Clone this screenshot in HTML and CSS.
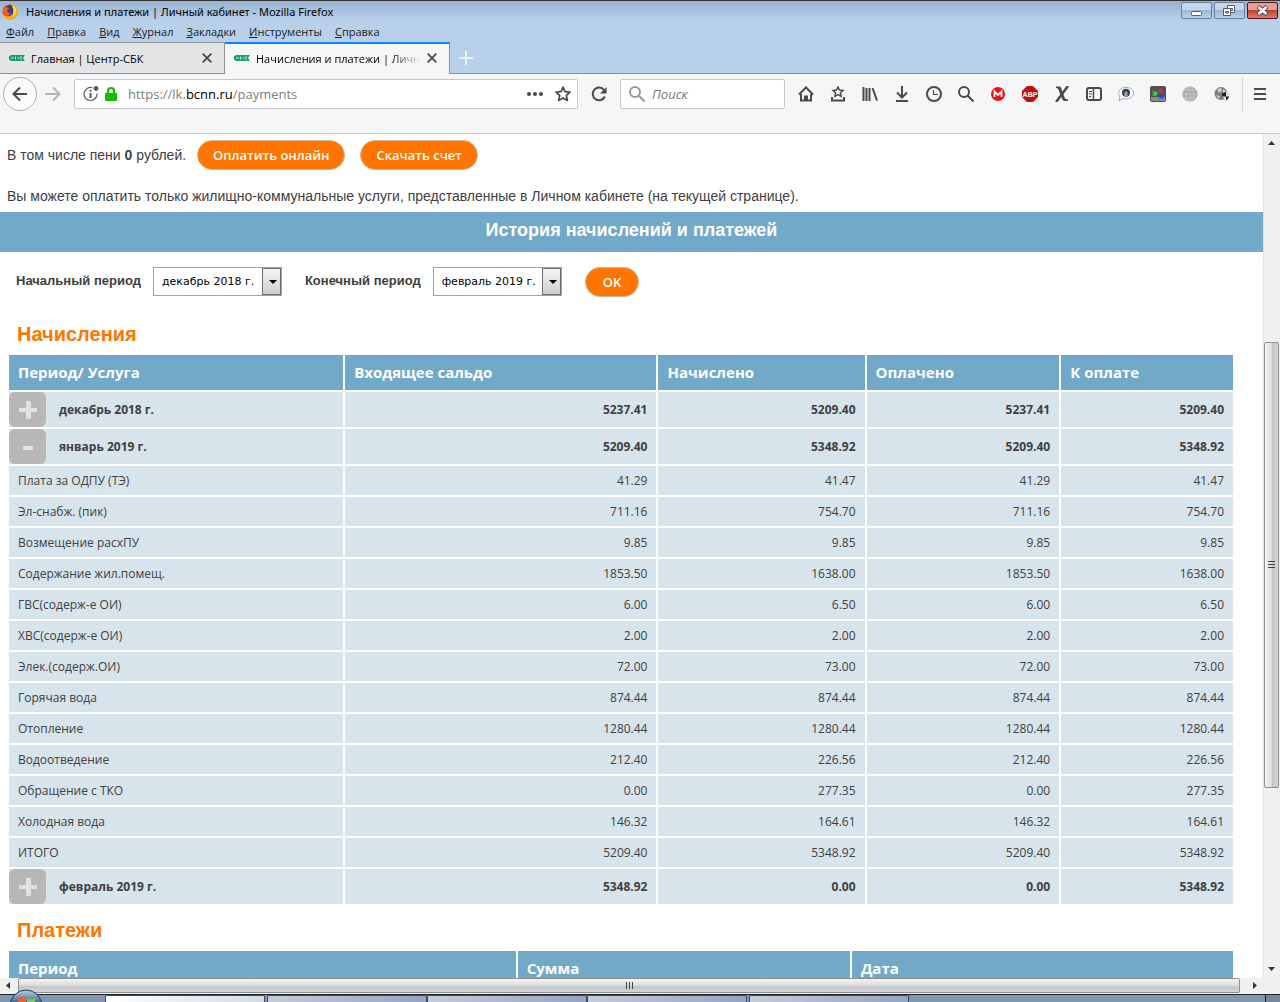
FILE: index.html
```html
<!DOCTYPE html>
<html lang="ru">
<head>
<meta charset="utf-8">
<title>Начисления и платежи | Личный кабинет</title>
<link rel="stylesheet" href="styles.css">
</head>
<body>
<div class="window">
  <header class="chrome">
    <div class="titlebar">
      <svg class="icon" viewBox="0 0 16 16"><circle cx="8" cy="8" r="7.6" fill="#e8371f"/><circle cx="8.3" cy="6.2" r="5.2" fill="#26478f"/><path d="M9 0c5 1 7.500 5 6.600 9-1 4-4 6.500-8 6.500C4 15.500 1 13 .500 9c2 3 5 4 7.500 3 3-1 4-4 3-7-.500-2-1-3.500-2-5z" fill="#ffb01a"/><path d="M1 5C1 3 2 2 3 1.500l.500 2C5 3 6 3.500 7 4.500L5 6.500c0 2 2 2.500 4 2-1 2.500-3 3-5 2.500C2 10 1 8 1 5z" fill="#f4601c"/><path d="M10 1c3 1 4.500 4 4 7-.500 2-1.500 3.500-3 4 1-3 1-7-1-11z" fill="#ffe03a"/></svg>
      <span class="window-title">Начисления и платежи | Личный кабинет - Mozilla Firefox</span>
      <div class="window-buttons">
        <button class="win-btn" aria-label="Свернуть"><svg width="29" height="15" viewBox="0 0 29 15"><rect x="9.500" y="8.500" width="10" height="4" rx="1" fill="#fff" stroke="#555b6b"/></svg></button>
        <button class="win-btn" aria-label="Развернуть"><svg width="29" height="15" viewBox="0 0 29 15"><path d="M12.500 2.500h7v7h-7z" fill="#fff" stroke="#555b6b"/><path d="M15.500 5.500h2v2h-2z" fill="#9ebad8" stroke="#555b6b"/><path d="M8.500 5.500h7v7h-7z" fill="#fff" stroke="#555b6b"/><path d="M10.500 8.500h3v1.500h-3z" fill="#9ebad8" stroke="#555b6b"/></svg></button>
        <button class="win-btn win-close" aria-label="Закрыть"><svg width="29" height="15" viewBox="0 0 29 15"><path d="M10 3.500l9 8M19 3.500l-9 8" stroke="#55505f" stroke-width="4.500"/><path d="M10.500 4l8 7M18.500 4l-8 7" stroke="#fff" stroke-width="2.500"/></svg></button>
      </div>
    </div>
    <nav class="menubar">
      <a href="#"><u>Ф</u>айл</a><a href="#"><u>П</u>равка</a><a href="#"><u>В</u>ид</a><a href="#"><u>Ж</u>урнал</a><a href="#"><u>З</u>акладки</a><a href="#"><u>И</u>нструменты</a><a href="#"><u>С</u>правка</a>
    </nav>
    <div class="tabs">
      <div class="tab">
        <svg class="icon" viewBox="0 0 16 16"><path d="M2 5h14l-2 3 2 3H2L0 9.500v-3z" fill="#1f9a6c"/><path d="M2 8h3M6.500 6.500v3M8.500 8h2M12 6v4" stroke="#c5e6d9"/></svg>
        <span class="tab-label">Главная | Центр-СБК</span>
        <button class="tab-close" aria-label="Закрыть вкладку"><svg width="10" height="10" viewBox="0 0 10 10"><path d="M.700.700l8.600 8.600M9.300.700L.700 9.300" stroke="#4a4a4b" stroke-width="1.800"/></svg></button>
      </div>
      <div class="tab tab-active">
        <svg class="icon" viewBox="0 0 16 16"><path d="M2 5h14l-2 3 2 3H2L0 9.500v-3z" fill="#1f9a6c"/><path d="M2 8h3M6.500 6.500v3M8.500 8h2M12 6v4" stroke="#c5e6d9"/></svg>
        <span class="tab-label">Начисления и платежи | Личный кабинет</span>
        <button class="tab-close" aria-label="Закрыть вкладку"><svg width="10" height="10" viewBox="0 0 10 10"><path d="M.700.700l8.600 8.600M9.300.700L.700 9.300" stroke="#4a4a4b" stroke-width="1.800"/></svg></button>
      </div>
      <button class="new-tab" aria-label="Новая вкладка"><svg width="14" height="14" viewBox="0 0 14 14"><path d="M7 0v14M0 7h14" stroke="#e9f1fa" stroke-width="2"/></svg></button>
    </div>
    <div class="navbar">
      <button class="back" aria-label="Назад"><svg class="icon" viewBox="0 0 16 16"><path d="M15 8H1.500M8 1.500L1.500 8 8 14.500" fill="none" stroke="#4a4a4b" stroke-width="2"/></svg></button>
      <button class="tool forward" aria-label="Вперёд"><svg class="icon" viewBox="0 0 16 16"><path d="M0 8h14.500M8 1.500L14.500 8 8 14.500" fill="none" stroke="#b3b4b6" stroke-width="2"/></svg></button>
      <div class="urlbar">
        <svg class="icon" viewBox="0 0 16 16"><path d="M14 7.500A6.500 6.500 0 1 1 9.500 1.800" fill="none" stroke="#5a5a5c" stroke-width="1.200"/><circle cx="13" cy="2.500" r="2.400" fill="#5a5a5c"/><path d="M7.500 7v5" stroke="#5a5a5c" stroke-width="2"/><circle cx="7.500" cy="4.800" r="1.100" fill="#5a5a5c"/></svg>
        <svg class="icon lock" viewBox="0 0 16 16"><path d="M5 8V5a3 3 0 0 1 6 0v3" fill="none" stroke="#12bc00" stroke-width="2.200"/><rect x="2" y="7" width="12" height="8" rx="1" fill="#12bc00"/></svg>
        <span class="url">https://lk.<b>bcnn.ru</b>/payments</span>
        <svg class="icon" viewBox="0 0 16 16" fill="#4a4a4b"><circle cx="2" cy="8" r="2"/><circle cx="8" cy="8" r="2"/><circle cx="14" cy="8" r="2"/></svg>
        <svg class="icon" viewBox="0 0 16 16"><path d="M8 1.200l2 4.500 5 .500-3.700 3.300 1.100 4.900L8 11.900l-4.400 2.500 1.100-4.900L1 6.200l5-.500z" fill="none" stroke="#4a4a4b" stroke-width="1.700" stroke-linejoin="round"/></svg>
      </div>
      <button class="tool reload" aria-label="Обновить"><svg class="icon" viewBox="0 0 16 16"><path d="M13.800 10.500A6.300 6.300 0 1 1 13 4" fill="none" stroke="#4a4a4b" stroke-width="2"/><path d="M15.500 1v6.500H9z" fill="#4a4a4b"/></svg></button>
      <div class="search">
        <svg class="icon" viewBox="0 0 16 16"><circle cx="6" cy="6" r="5" fill="none" stroke="#98989a" stroke-width="2"/><path d="M9.500 9.500l6 6" stroke="#98989a" stroke-width="2"/></svg>
        <input class="search-input" type="text" placeholder="Поиск" aria-label="Поиск">
      </div>
      <div class="tools">
        <button class="tool" aria-label="Домой"><svg class="icon" viewBox="0 0 16 16"><path d="M1 8.500l7-7 7 7M3 8v6.500h10V8" fill="none" stroke="#4a4a4b" stroke-width="2"/><path d="M6 15v-5.500h4V15z" fill="#4a4a4b"/></svg></button>
        <button class="tool" aria-label="Закладки"><svg class="icon" viewBox="0 0 16 16"><path d="M8 1l1.500 3 3.500.500-2.600 2.300.700 3.500L8 8.700l-3.100 1.600.700-3.500L3 4.500 6.500 4z" fill="none" stroke="#4a4a4b" stroke-width="1.500"/><path d="M2 11v3.500h12V11" fill="none" stroke="#4a4a4b" stroke-width="2"/></svg></button>
        <button class="tool" aria-label="Библиотека"><svg class="icon" viewBox="0 0 16 16"><path d="M1.500 1v14M4.500 2v13M7.500 2v13M10.500 2l4.500 12.500" stroke="#4a4a4b" stroke-width="2"/></svg></button>
        <button class="tool" aria-label="Загрузки"><svg class="icon" viewBox="0 0 16 16"><path d="M8 0v11M3 6.500l5 5 5-5M2 15h12" fill="none" stroke="#4a4a4b" stroke-width="2"/></svg></button>
        <button class="tool" aria-label="История"><svg class="icon" viewBox="0 0 16 16"><circle cx="8" cy="8" r="7" fill="none" stroke="#4a4a4b" stroke-width="2"/><path d="M7.500 4v4.500H12" fill="none" stroke="#4a4a4b" stroke-width="1.200"/></svg></button>
        <button class="tool" aria-label="Найти"><svg class="icon" viewBox="0 0 16 16"><circle cx="6" cy="6" r="5" fill="none" stroke="#4a4a4b" stroke-width="2"/><path d="M9.500 9.500l6 6" stroke="#4a4a4b" stroke-width="2"/></svg></button>
        <button class="tool" aria-label="Mega"><svg class="icon" viewBox="0 0 16 16"><circle cx="8" cy="8" r="7" fill="#f20d17"/><path d="M4.500 11V5.500L8 9l3.500-3.500V11" fill="none" stroke="#fff" stroke-width="1.800"/></svg></button>
        <button class="tool" aria-label="Adblock Plus"><svg class="icon" viewBox="0 0 16 16"><path d="M5 0h6l5 5v6l-5 5H5l-5-5V5z" fill="#c70d0b"/><text x="8" y="11" text-anchor="middle" class="abp-text">ABP</text></svg></button>
        <button class="tool" aria-label="Расширение X"><svg class="icon" viewBox="0 0 16 16"><path d="M2 0.500h3.500c1 0 1.500 1 2 2.500l2.500 7c.800 2.500 1.500 3.500 4 3.500v1.500h-3c-2 0-2.800-1.500-3.500-3.500L5 5C4.300 3 3.800 2 2 2z" fill="#4a4a4b"/><path d="M14 0L8.500 7.500 2 16" fill="none" stroke="#4a4a4b" stroke-width="2.500"/></svg></button>
        <button class="tool" aria-label="Боковая панель"><svg class="icon" viewBox="0 0 16 16"><rect x="1" y="2" width="14" height="12" rx="2" fill="none" stroke="#4a4a4b" stroke-width="2"/><path d="M7.500 2v12" stroke="#4a4a4b" stroke-width="1.500"/><path d="M3 5.500h3M3 8h3M3 10.500h2" stroke="#4a4a4b"/></svg></button>
        <button class="tool" aria-label="Сообщения"><svg class="icon" viewBox="0 0 16 16"><path d="M1 15l1-4C-1 7 1 1.500 8 1.500S16 6 15.500 8c-1 4-6 5.500-10.500 4.500z" fill="#fff" stroke="#a7a7aa"/><circle cx="8" cy="6.800" r="4" fill="#24406d"/><path d="M7 10.500c-2-3 0-5 2-5.500 1 2 0 3 1 5z" fill="#c58d7c"/></svg></button>
        <button class="tool" aria-label="Прокси"><svg class="icon" viewBox="0 0 16 16"><rect width="16" height="16" rx="2" fill="#4f5152"/><rect x="1" y="11" width="14" height="4" fill="#898b8c"/><path d="M2 5l3 1V4l3 3.500L5 11V9.500L2 10l1.500-2.500z" fill="#35d52e"/><path d="M9 1.500l1.500 1L13 2l-1 2 1 2.500-3 .500-2-2 1.500-1z" fill="#e92631"/><path d="M9 8l2 .500L13.500 8 13 10l.500 3-2.500-1-2 1.500L9.500 11 8 10z" fill="#1750e9"/></svg></button>
        <button class="tool" aria-label="Сеть"><svg class="icon" viewBox="0 0 16 16"><circle cx="8" cy="8" r="7.600" fill="#a9a9a9"/><path d="M0 8h16M1.500 4h13M1.500 12h13M8 0v16" stroke="#c8c8c8" fill="none"/><ellipse cx="8" cy="8" rx="4" ry="7.500" fill="none" stroke="#c8c8c8"/></svg></button>
        <button class="tool" aria-label="Защита"><svg class="icon" viewBox="0 0 16 16"><circle cx="7" cy="7.500" r="6.500" fill="#7c7c7e"/><path d="M3 3l4-1 1 3-3 2zM2 9l4 1-1 3zM9 3l3 2-3 2z" fill="#cfcfd1"/><path d="M8 7l4-1.500L15.500 7c0 3.500-1 6-3.500 7.500C9.500 13 8 10.500 8 7z" fill="#dcdcde"/><path d="M12 6v4.500H8.500C8 9 8 8 8.200 7.200zM12 10.500h3c-.500 2-1.500 3-3 4z" fill="#19191a"/></svg></button>
      </div>
      <button class="tool menu-btn" aria-label="Меню"><svg class="icon" viewBox="0 0 16 16"><path d="M2 3h12M2 8h12M2 13h12" stroke="#4a4a4b" stroke-width="2"/></svg></button>
    </div>
  </header>

  <div class="viewport">
    <main class="page">
      <p class="penalty"><span>В том числе пени <strong>0</strong> рублей.</span><button class="pill">Оплатить онлайн</button><button class="pill">Скачать счет</button></p>
      <p class="note">Вы можете оплатить только жилищно-коммунальные услуги, представленные в Личном кабинете (на текущей странице).</p>
      <h1 class="banner">История начислений и платежей</h1>
      <form class="filter">
        <label class="filter-label" for="from">Начальный период</label>
        <div class="select"><select id="from"><option>декабрь 2018 г.</option></select></div>
        <label class="filter-label" for="to">Конечный период</label>
        <div class="select"><select id="to"><option>февраль 2019 г.</option></select></div>
        <button class="pill ok" type="button">OK</button>
      </form>
      <h2 class="section">Начисления</h2>
      <table class="grid">
        <colgroup><col class="c-name"><col class="c-in"><col class="c-charged"><col class="c-paid"><col></colgroup>
        <thead><tr><th>Период/ Услуга</th><th>Входящее сальдо</th><th>Начислено</th><th>Оплачено</th><th>К оплате</th></tr></thead>
        <tbody>
          <tr class="period"><td><div class="period-name"><button class="toggle" aria-label="Развернуть"><svg width="18" height="18" viewBox="0 0 18 18"><path d="M7 0h5v7h6v4h-6v7H7v-7H0V7h7z" fill="#e2e2e2"/></svg></button>декабрь 2018 г.</div></td><td>5237.41</td><td>5209.40</td><td>5237.41</td><td>5209.40</td></tr>
          <tr class="period"><td><div class="period-name"><button class="toggle" aria-label="Свернуть"><svg width="18" height="18" viewBox="0 0 18 18"><path d="M4 8h10v4H4z" fill="#e2e2e2"/></svg></button>январь 2019 г.</div></td><td>5209.40</td><td>5348.92</td><td>5209.40</td><td>5348.92</td></tr>
          <tr><td>Плата за ОДПУ (ТЭ)</td><td>41.29</td><td>41.47</td><td>41.29</td><td>41.47</td></tr>
          <tr><td>Эл-снабж. (пик)</td><td>711.16</td><td>754.70</td><td>711.16</td><td>754.70</td></tr>
          <tr><td>Возмещение расхПУ</td><td>9.85</td><td>9.85</td><td>9.85</td><td>9.85</td></tr>
          <tr><td>Содержание жил.помещ.</td><td>1853.50</td><td>1638.00</td><td>1853.50</td><td>1638.00</td></tr>
          <tr><td>ГВС(содерж-е ОИ)</td><td>6.00</td><td>6.50</td><td>6.00</td><td>6.50</td></tr>
          <tr><td>ХВС(содерж-е ОИ)</td><td>2.00</td><td>2.00</td><td>2.00</td><td>2.00</td></tr>
          <tr><td>Элек.(содерж.ОИ)</td><td>72.00</td><td>73.00</td><td>72.00</td><td>73.00</td></tr>
          <tr><td>Горячая вода</td><td>874.44</td><td>874.44</td><td>874.44</td><td>874.44</td></tr>
          <tr><td>Отопление</td><td>1280.44</td><td>1280.44</td><td>1280.44</td><td>1280.44</td></tr>
          <tr><td>Водоотведение</td><td>212.40</td><td>226.56</td><td>212.40</td><td>226.56</td></tr>
          <tr><td>Обращение с ТКО</td><td>0.00</td><td>277.35</td><td>0.00</td><td>277.35</td></tr>
          <tr><td>Холодная вода</td><td>146.32</td><td>164.61</td><td>146.32</td><td>164.61</td></tr>
          <tr><td>ИТОГО</td><td>5209.40</td><td>5348.92</td><td>5209.40</td><td>5348.92</td></tr>
          <tr class="period"><td><div class="period-name"><button class="toggle" aria-label="Развернуть"><svg width="18" height="18" viewBox="0 0 18 18"><path d="M7 0h5v7h6v4h-6v7H7v-7H0V7h7z" fill="#e2e2e2"/></svg></button>февраль 2019 г.</div></td><td>5348.92</td><td>0.00</td><td>0.00</td><td>5348.92</td></tr>
        </tbody>
      </table>
      <h2 class="section">Платежи</h2>
      <table class="grid">
        <colgroup><col class="p-period"><col class="p-sum"><col></colgroup>
        <thead><tr><th>Период</th><th>Сумма</th><th>Дата</th></tr></thead>
      </table>
    </main>
    <div class="vbar">
      <svg width="7" height="4" viewBox="0 0 7 4"><path d="M0 4l3.500-4L7 4z" fill="#333"/></svg>
      <div class="vtrack"><div class="vthumb"><svg width="7" height="9" viewBox="0 0 7 9"><path d="M0 1.500h7M0 4.500h7M0 7.500h7" stroke="#444"/></svg></div></div>
      <svg width="7" height="4" viewBox="0 0 7 4"><path d="M0 0l3.500 4L7 0z" fill="#333"/></svg>
    </div>
  </div>
  <div class="hbar">
    <svg width="4" height="7" viewBox="0 0 4 7"><path d="M4 0L0 3.500 4 7z" fill="#333"/></svg>
    <div class="hthumb"><svg width="9" height="7" viewBox="0 0 9 7"><path d="M1.500 0v7M4.500 0v7M7.500 0v7" stroke="#444"/></svg></div>
    <svg width="4" height="7" viewBox="0 0 4 7"><path d="M0 0l4 3.500L0 7z" fill="#333"/></svg>
  </div>
  <footer class="taskbar">
    <svg class="orb" width="34" height="34" viewBox="0 0 34 34"><defs><linearGradient id="orb" x2="0" y2="1"><stop offset="0" stop-color="#b9cfdf"/><stop offset=".5" stop-color="#1d4d79"/></linearGradient></defs><circle cx="17" cy="17" r="16" fill="url(#orb)" stroke="#1f3f62"/><path d="M9 10c2-3 5-3 8-2v7H9z" fill="#e2652b"/><path d="M18 9c3 2 6 1 9 0l-2 7h-7z" fill="#8fc03e"/></svg>
    <div class="task task-active"></div>
    <div class="task-group"><div class="task"></div><div class="task"></div><div class="task"></div></div>
    <div class="task"></div>
    <div class="show-desktop"></div>
  </footer>
</div>
</body>
</html>
```
FILE: styles.css
```css
* { box-sizing: border-box; }
body { margin: 0; font-family: "Open Sans", "Noto Sans", sans-serif; font-size: 12px; color: #333; }
button { margin: 0; padding: 0; border: 0; background: none; font: inherit; color: inherit; }
svg { display: block; flex: none; }
.icon { width: 16px; height: 16px; }
.window { display: flex; flex-direction: column; height: 100vh; overflow: hidden; }

/* Browser chrome */
.chrome { flex: none; background: #b9d0ea; }
.titlebar { display: flex; align-items: center; height: 22px; padding: 0 2px; gap: 8px; border-top: 1px solid #333; background: linear-gradient(#98b4d2, #b9d0ea); }
.window-title { flex: 1; font: 11px/20px "Noto Sans", sans-serif; color: #000; }
.window-buttons { display: flex; gap: 2px; align-self: flex-start; padding-top: 1px; }
.win-btn { height: 17px; border: 1px solid #68809d; border-radius: 2px; background: linear-gradient(#c3d6ea 45%, #9cb8d5 50%, #b9d0e8); }
.win-close { border-color: #4d1322; background: linear-gradient(#e4a193 45%, #bd432b 50%, #d98069); }
.menubar { display: flex; gap: 13px; height: 20px; padding-left: 6px; line-height: 20px; font-size: 11px; }
.menubar a { color: #1c1c1c; text-decoration: none; }
.tabs { display: flex; height: 32px; border-bottom: 1px solid #7d93ad; }
.tab { display: flex; align-items: center; width: 225px; height: 31px; padding: 0 12px 0 9px; gap: 6px; border-top: 1px solid #8e9299; border-right: 1px solid #8e9299; background: #e3e4e6; font-size: 11px; color: #000; }
.tab-active { height: 32px; padding-bottom: 2px; border-top: 2px solid #0a84ff; background: #f5f6f7; }
.tab-label { flex: 1; overflow: hidden; white-space: nowrap; }
.tab-active .tab-label { -webkit-mask-image: linear-gradient(to left, transparent, #000 30px); mask-image: linear-gradient(to left, transparent, #000 30px); }
.new-tab { padding: 0 9px; }
.navbar { display: flex; align-items: flex-start; height: 60px; padding: 3px 3px 0; border-bottom: 1px solid #c9cacc; background: #f5f6f7; }
.back { display: grid; place-items: center; width: 34px; height: 34px; border: 1px solid #adaeb0; border-radius: 50%; background: #fbfbfc; }
.tool { display: grid; place-items: center; width: 32px; height: 34px; }
.urlbar, .search { display: flex; align-items: center; height: 30px; margin-top: 2px; border: 1px solid #c7c8ca; border-radius: 2px; background: #fff; }
.urlbar { flex: 1; margin-left: 5px; padding: 0 6px 0 8px; gap: 12px; }
.lock { margin-left: -8px; }
.url { flex: 1; margin-left: -3px; font-size: 13px; color: #808080; }
.url b { font-weight: 400; color: #000; }
.reload { margin: 0 5px; }
.search { width: 165px; padding: 0 8px; gap: 7px; }
.search-input { min-width: 0; width: 100%; padding: 0; border: 0; outline: 0; font: italic 13px "Open Sans", sans-serif; }
.search-input::placeholder { color: #7a7a7a; }
.tools { display: flex; margin: 0 4px 0 5px; }
.abp-text { font: bold 7px "Liberation Sans", sans-serif; fill: #fff; }
.menu-btn { width: 35px; padding-right: 1px; border-left: 1px solid #d7d8da; }

/* Site page */
.viewport { flex: 1; min-height: 0; display: flex; }
.page { flex: 1; min-width: 0; overflow: hidden; background: #fff; }
.penalty, .note { margin: 0; padding: 0 7px; font: 14px/16px "Liberation Sans", Arial, sans-serif; color: #404040; }
.penalty { display: flex; align-items: center; gap: 15px; padding-top: 6px; }
.penalty span { margin-right: -4px; }
.note { padding-top: 18px; padding-bottom: 8px; }
.pill { height: 30px; padding: 0 15px; border: 1px solid #d6b493; border-radius: 15px; background: #ff7500; color: #fff; font: 600 13px "Open Sans", sans-serif; }
.ok { padding: 0 17px; }
.banner { margin: 0; padding-bottom: 4px; background: #72a9c9; color: #fff; text-align: center; font: bold 18px/36px "Liberation Sans", Arial, sans-serif; }
.filter { display: flex; align-items: flex-start; padding: 15px 16px 0; }
.filter-label { margin-right: 12px; font: bold 13px/28px "Liberation Sans", Arial, sans-serif; color: #404040; }
.select { position: relative; width: 129px; height: 29px; margin-right: 23px; }
.select select { appearance: none; width: 100%; height: 100%; padding: 0 8px; border: 1px solid #a2a2a2; border-radius: 0; background: #fff; font: 11px "DejaVu Sans", sans-serif; color: #000; }
.select::before { content: ""; position: absolute; right: 1px; top: 1px; bottom: 1px; width: 17px; border: 1px solid #707070; background: linear-gradient(#f4f4f4, #cfcfcf); pointer-events: none; }
.select::after { content: ""; position: absolute; right: 5px; top: 13px; border: 4px solid transparent; border-top-color: #000; border-bottom: 0; pointer-events: none; }
.section { margin: 0; padding: 22px 17px 6px; color: #ff7500; font: bold 20px/30px "Liberation Sans", Arial, sans-serif; }
.grid { width: calc(100% - 39px); margin-left: 9px; table-layout: fixed; border-spacing: 0; }
.grid + .section { padding-top: 11px; }
.grid th { height: 35px; padding: 0 9px 2px; background: #72a9c9; color: #fff; text-align: left; font-size: 15px; font-weight: 700; }
.grid td { height: 31px; padding: 0 9px; border-top: 2px solid #fff; background: #d8e4eb; background-clip: padding-box; text-align: right; color: #404040; font-size: 12px; }
.grid th + th, .grid td + td { border-left: 2px solid #fff; }
.grid td:first-child { text-align: left; }
.grid .period td { height: 37px; font-weight: 700; }
.grid .period td:first-child { padding-left: 0; }
.period-name { display: flex; align-items: center; gap: 13px; }
.toggle { display: grid; place-items: center; width: 37px; height: 35px; border-radius: 6px; background: #b7b7b7; }
.c-name { width: 27.3%; }
.c-in { width: 25.6%; }
.c-charged { width: 17%; }
.c-paid { width: 15.9%; }
.p-period { width: 41.4%; }
.p-sum { width: 27.3%; }

/* Scrollbars */
.vbar { flex: none; display: flex; flex-direction: column; align-items: center; gap: 6px; width: 17px; padding: 7px 1px 7px 0; border-left: 1px solid #e3e3e3; background: #f0f0f0; }
.vtrack { flex: 1; width: 100%; padding-top: 191px; }
.vthumb { display: grid; place-items: center; height: 72%; border: 1px solid #8f8f8f; border-radius: 2px; background: linear-gradient(to right, #f4f4f4, #dcdcde 50%, #c5c5c8 55%, #d4d4d6); }
.hbar { flex: none; display: flex; align-items: center; gap: 8px; height: 16px; padding: 0 23px 1px 6px; background: #f0f0f0; }
.hthumb { flex: 1; display: grid; place-items: center; height: 15px; margin-right: 5px; border: 1px solid #8f8f8f; border-radius: 2px; background: linear-gradient(#f4f4f4, #dcdcde 50%, #c5c5c8 55%, #d4d4d6); }

/* Taskbar */
.taskbar { position: relative; flex: none; display: flex; gap: 2px; height: 8px; padding-left: 105px; border-top: 1px solid #1a222e; background: #8396b1; }
.orb { position: absolute; left: 9px; top: -6px; }
.task { width: 160px; border: 1px solid #3d4b60; border-bottom: 0; border-radius: 2px 2px 0 0; background: linear-gradient(to right, #c3ccda, #94a5bd); }
.task-active { background: linear-gradient(to right, #fff, #d3dbe6); }
.task-group { display: flex; }
.show-desktop { width: 15px; margin-left: auto; border-left: 1px solid #1a222e; background: #77869b; }
```
